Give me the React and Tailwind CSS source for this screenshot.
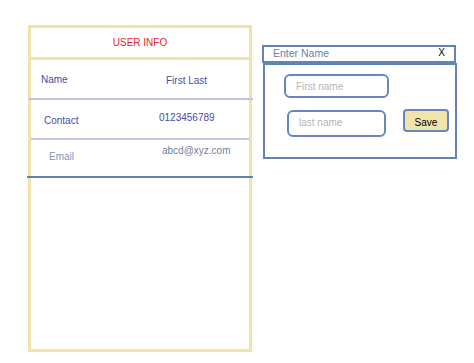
import React from "react";

const rows = [
  {
    label: "Name",
    value: "First Last",
    h: "h-[38px]",
    labelCls: "pl-[10px] pt-[1px] text-[#4b4aa9]",
    valueCls: "pl-[135px] pt-[3px] text-[#4b4aa9]",
  },
  {
    label: "Contact",
    value: "0123456789",
    h: "h-[38px]",
    labelCls: "pl-[13px] pt-[2px] text-[#4b4aa9]",
    valueCls: "pl-[128px] -mt-[4px] text-[#4b4aa9]",
  },
  {
    label: "Email",
    value: "abcd@xyz.com",
    h: "h-[36px]",
    labelCls: "pl-[18px] -mt-[3px] text-[#8594b6]",
    valueCls: "pl-[131px] -mt-[16px] text-[#6f80a2]",
  },
];

const lineCls = [
  "-ml-[3px] -mr-[4px] h-[2px] bg-[#c4c1e8]",
  "h-[2px] bg-[#c7c3e8]",
  "-mx-[4px] h-[2px] bg-[#6383b7]",
];

const UserInfo = () => (
  <div className="w-[224px] h-[327px] border-[3px] border-[#f0e3aa] flex flex-col">
    <div className="h-[32px] flex items-center justify-center text-[10px] text-[#e3292b] border-b-[3px] border-[#f0e3aa]">
      USER INFO
    </div>
    {rows.map((r, i) => (
      <React.Fragment key={r.label}>
        <div className={`${r.h} relative text-[10px]`}>
          <div className={`absolute inset-0 flex items-center ${r.labelCls}`}>{r.label}</div>
          <div className={`absolute inset-0 flex items-center ${r.valueCls}`}>{r.value}</div>
        </div>
        <div className={lineCls[i]} />
      </React.Fragment>
    ))}
  </div>
);

const NameDialog = () => (
  <div className="mt-[20px] flex flex-col">
    <div className="w-[194px] h-[18px] border-2 border-[#6283b8] flex items-center justify-between pl-[9px] pr-[9px] text-[10.5px]">
      <span className="text-[#6c7ea9]">Enter Name</span>
      <span className="text-black text-[10px] -mt-[3px]">X</span>
    </div>
    <div className="w-[194px] h-[96px] ml-[1px] border-2 border-[#6283b8] flex text-[10px]">
      <div className="flex flex-col pl-[19px] pt-[9px]">
        <div className="w-[105px] h-[24px] border-2 border-[#6787bc] rounded-[6px] flex items-center pl-[10px] text-[#b5b5b5]">
          First name
        </div>
        <div className="w-[99px] h-[27px] ml-[3px] mt-[12px] border-2 border-[#6787bc] rounded-[6px] flex items-center pl-[10px] pb-[3px] text-[#b5b5b5]">
          last name
        </div>
      </div>
      <div className="ml-[14px] mt-[44px] w-[46px] h-[23px] bg-[#f1e3a9] border-2 border-[#6787bc] rounded-[4px] flex items-center justify-center pt-[4px] text-black">
        Save
      </div>
    </div>
  </div>
);

export default function App() {
  return (
    <div
      className="w-[474px] h-[363px] bg-white flex items-start pt-[25px] pl-[28px] gap-[10px]"
      style={{ fontFamily: '"Liberation Sans", Arial, sans-serif' }}
    >
      <UserInfo />
      <NameDialog />
    </div>
  );
}
